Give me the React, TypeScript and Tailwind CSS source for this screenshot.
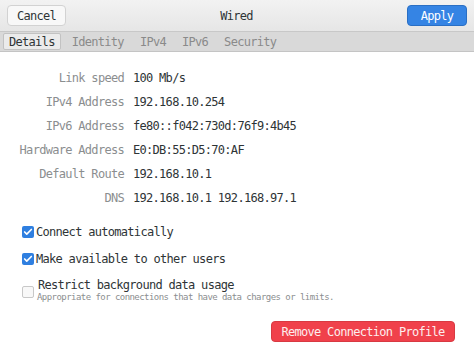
import { Check } from 'lucide-react';

const rows: [string, string][] = [
  ['Link speed', '100 Mb/s'],
  ['IPv4 Address', '192.168.10.254'],
  ['IPv6 Address', 'fe80::f042:730d:76f9:4b45'],
  ['Hardware Address', 'E0:DB:55:D5:70:AF'],
  ['Default Route', '192.168.10.1'],
  ['DNS', '192.168.10.1 192.168.97.1'],
];

const tabs = ['Details', 'Identity', 'IPv4', 'IPv6', 'Security'];

function Checkbox({ checked }: { checked: boolean }) {
  if (checked) {
    return (
      <span className="w-[12px] h-[12px] rounded-[2px] bg-[#2f7fe0] flex items-center justify-center flex-shrink-0">
        <Check className="w-[10px] h-[10px] text-white" strokeWidth={4} />
      </span>
    );
  }
  return <span className="block w-[12px] h-[12px] rounded-[2px] border border-[#c8c8c8] bg-[#f8f8f8] flex-shrink-0" />;
}

export default function App() {
  return (
    <div
      className="w-[474px] h-[362px] bg-white overflow-hidden text-[12px] tracking-[-0.7px] text-[#2e3436]"
      style={{ fontFamily: '"DejaVu Sans Mono", "Liberation Mono", monospace' }}
    >
      {/* Header bar */}
      <div className="h-[31px] bg-gradient-to-b from-[#f2f2f2] to-[#e6e6e6] flex items-center justify-between px-[7px]">
        <button className="w-[59px] h-[21px] rounded-[4px] bg-[#f8f8f8] border border-[#d2d2d2] text-[#2e3436] flex items-center justify-center">
          Cancel
        </button>
        <span className="text-[#2e3436]">Wired</span>
        <button className="w-[60px] h-[21px] rounded-[4px] bg-[#3584e4] border border-[#2a6fc4] text-white flex items-center justify-center">
          Apply
        </button>
      </div>

      {/* Tabs */}
      <div className="h-[21px] bg-[#d9d9d9] border-t border-[#c8c8c8] border-b border-b-[#c4c4c4] flex items-center pl-[3px] gap-[1px]">
        {tabs.map((t, i) => (
          <span
            key={t}
            className={
              i === 0
                ? 'h-[17px] px-[5px] flex items-center bg-[#ebebeb] border border-[#c2c2c2] rounded-[2px] text-[#2e3436]'
                : 'h-[17px] px-[5px] ml-[5px] flex items-center text-[#8a8a8a]'
            }
          >
            {t}
          </span>
        ))}
      </div>

      {/* Details */}
      <div className="pt-[14px] flex flex-col">
        {rows.map(([k, v]) => (
          <div key={k} className="h-[24px] flex items-center">
            <span className="w-[124px] text-right text-[#8b8e8f]">{k}</span>
            <span className="ml-[9px] text-[#2e3436]">{v}</span>
          </div>
        ))}
      </div>

      {/* Options */}
      <div className="mt-[8px] pl-[22px] flex flex-col">
        <div className="h-[27px] flex items-center gap-[2px]">
          <Checkbox checked />
          <span>Connect automatically</span>
        </div>
        <div className="h-[27px] flex items-center gap-[2px]">
          <Checkbox checked />
          <span>Make available to other users</span>
        </div>
        <div className="mt-[6px] flex items-center gap-[3px]">
          <div className="mt-[3px] flex-shrink-0">
            <Checkbox checked={false} />
          </div>
          <div className="flex flex-col">
            <span className="pl-[1px] leading-[14px]">Restrict background data usage</span>
            <span className="text-[9px] tracking-[-0.55px] leading-[11px] text-[#8b8e8f]">
              Appropriate for connections that have data charges or limits.
            </span>
          </div>
        </div>
      </div>

      <div className="flex justify-end pr-[19px] mt-[18px]">
        <button className="w-[184px] h-[21px] rounded-[4px] bg-[#f0414b] border border-[#d83a42] text-[#fdeeee] flex items-center justify-center">
          Remove Connection Profile
        </button>
      </div>
    </div>
  );
}
